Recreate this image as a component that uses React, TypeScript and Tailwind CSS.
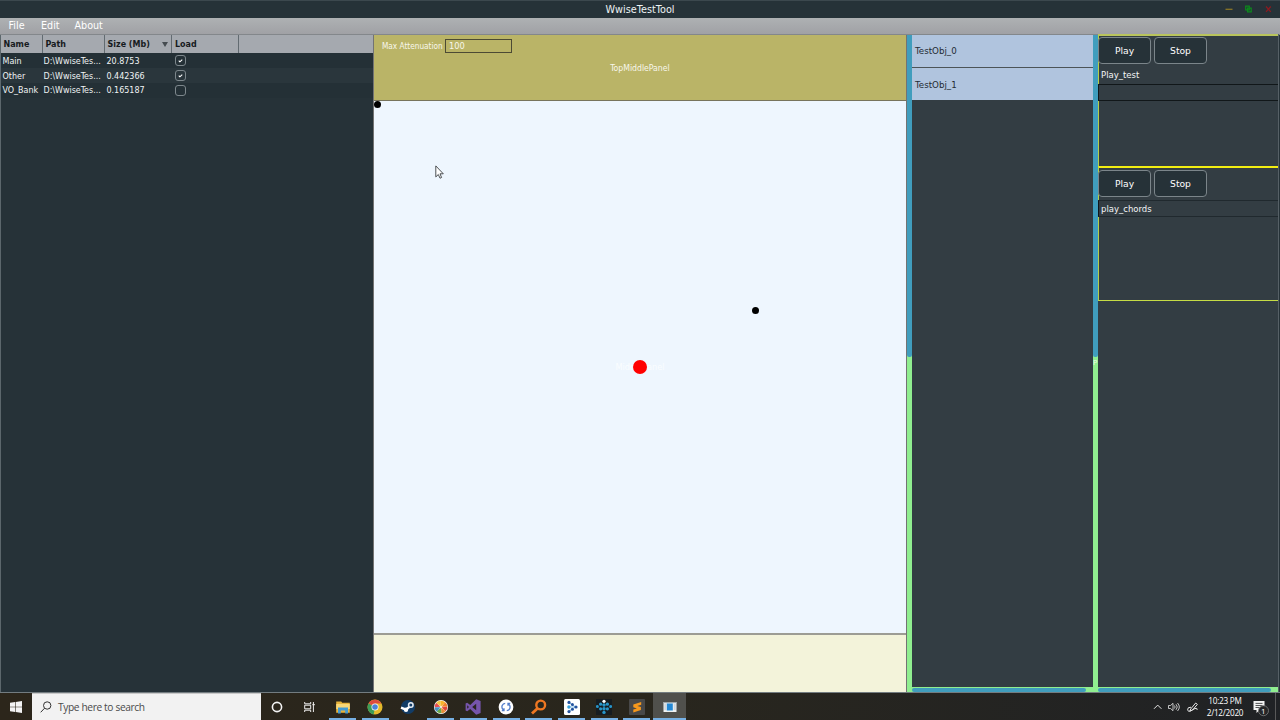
import type { ReactNode } from "react";

const BANKS = [
  { name: "Main", path: "D:\\WwiseTes...", size: "20.8753", loaded: true },
  { name: "Other", path: "D:\\WwiseTes...", size: "0.442366", loaded: true },
  { name: "VO_Bank", path: "D:\\WwiseTes...", size: "0.165187", loaded: false },
];

function TitleBar() {
  return (
    <div className="relative flex h-[18px] shrink-0 items-center justify-center border-t border-[#3c484e] bg-[#263238] text-[9.7px] text-[#eef2f4]">
      <span className="pt-px">WwiseTestTool</span>
      <svg className="absolute top-[3px] right-[4px] h-[10px] w-[52px]" viewBox="0 0 52 10" fill="none">
        <path d="M1.5 5.3h7" stroke="#8a7526" strokeWidth="1.3" />
        <path d="M21.7 2.2h3.6v3.6h-3.6zM23.6 4.2h3.6v3.6h-3.6z" stroke="#0c8a1c" strokeWidth="1.2" />
        <path d="M42 2.5l4.8 5.4M46.8 2.5L42 7.9" stroke="#8b1a20" strokeWidth="1.3" />
      </svg>
    </div>
  );
}

function MenuBar() {
  return (
    <div className="flex h-[17px] shrink-0 items-center border-b border-[#83878b] bg-linear-to-b from-[#aeb1b3] to-[#a0a1a5] text-[9.6px] text-white">
      <span className="w-[33px] pl-[8.5px]">File</span>
      <span className="w-[33px] pl-[8px]">Edit</span>
      <span className="pl-[8.5px]">About</span>
    </div>
  );
}

function BankRow({ name, path, size, loaded }: (typeof BANKS)[number]) {
  return (
    <div className="flex h-[14.8px] items-center text-[#f0f3f4] odd:bg-[#243036] even:bg-[#2a363c]">
      <span className="w-[41px] pl-[1.5px]">{name}</span>
      <span className="w-[63px] pl-[1.5px] whitespace-nowrap">{path}</span>
      <span className="w-[67px] pl-[1.5px]">{size}</span>
      <span className="ml-[3px] flex h-[11px] w-[11px] items-center justify-center rounded-[3px] border border-[#7d878c]">
        {loaded && (
          <svg viewBox="0 0 8 8" className="h-[7px] w-[7px]" fill="none" stroke="#fff" strokeWidth="1.2">
            <path d="M2 4.2l1.3 1.3L6 2.9" />
          </svg>
        )}
      </span>
    </div>
  );
}

function BankTable() {
  return (
    <section className="flex w-[373px] shrink-0 flex-col border-l border-[#5c676c] bg-[#263238] font-['DejaVu_Sans_Condensed','DejaVu_Sans',sans-serif] text-[8.9px]">
      <div className="flex h-[18px] items-stretch bg-[#a5a9af] leading-[18px] font-bold text-[#171b1e]">
        <span className="w-[42px] border-r border-[#626b71] pl-[2.5px]">Name</span>
        <span className="w-[62px] border-r border-[#626b71] pl-[2.5px]">Path</span>
        <span className="flex w-[67px] items-center justify-between border-r border-[#626b71] pr-[3px] pl-[2.5px]">
          Size (Mb)
          <svg viewBox="0 0 6 5" className="h-[5px] w-[6px]" fill="#454c50">
            <path d="M0 0h6L3 5z" />
          </svg>
        </span>
        <span className="w-[67px] border-r border-[#626b71] pl-[3px]">Load</span>
      </div>
      <div className="pt-[0.4px]">
        {BANKS.map((bank) => (
          <BankRow key={bank.name} {...bank} />
        ))}
      </div>
    </section>
  );
}

function MiddleColumn() {
  return (
    <section className="flex w-[534px] shrink-0 flex-col border-x border-[#737373]">
      <div className="relative h-[66px] shrink-0 border-b border-[#77745d] bg-[#bab467] font-['DejaVu_Sans_Condensed','DejaVu_Sans',sans-serif] text-[#f8f7ec]">
        <div className="flex items-center pt-[4px] pl-[8px] text-[8.2px]">
          <span className="w-[63px] whitespace-nowrap">Max Attenuation</span>
          <span className="flex h-[14px] w-[67px] items-center border border-[#4c4a34] pl-[3px] text-[9.2px]">100</span>
        </div>
        <p className="absolute inset-x-0 top-[27px] text-center text-[8.6px] leading-[12px]">TopMiddlePanel</p>
      </div>
      <div className="relative flex h-[532px] shrink-0 items-center justify-center bg-[#eef6fe] text-[8.2px] text-[#fafdff]">
        <span>MiddlePanel</span>
        <i className="absolute top-0 left-0 h-[7px] w-[7px] rounded-full bg-black" />
        <i className="absolute top-[205.5px] left-[378px] h-[7px] w-[7px] rounded-full bg-black" />
        <i className="absolute top-[259px] left-[259px] h-[14px] w-[14px] rounded-full bg-[#ff0000]" />
        <svg className="absolute top-[64px] left-[61px] h-[14px] w-[9px]" viewBox="0 0 9 14" fill="#fff" stroke="#3a3d40" strokeWidth="0.9">
          <path d="M.8.9v11l2.5-2.4 1.7 3.7 1.6-.7L5 8.8h3.3z" />
        </svg>
      </div>
      <div className="grow border-t-2 border-[#9c9c94] bg-[#f3f3da]" />
    </section>
  );
}

function VerticalBar({ children }: { children?: ReactNode }) {
  return (
    <div className="relative w-[5px] shrink-0 bg-[#90ee90]">
      <div className="mr-[0.5px] h-[322px] rounded-b-[2px] bg-[#409dbd]" />
      {children}
    </div>
  );
}

function HorizontalBar() {
  return (
    <div className="h-[5px] shrink-0 bg-[#90ee90] pt-px pr-[7px]">
      <div className="h-[4px] rounded-[2px] bg-[#409dbd]" />
    </div>
  );
}

function ObjectList() {
  return (
    <section className="flex w-[181px] shrink-0 flex-col bg-[#333d43]">
      <div className="grow text-[8.7px] text-[#242b33]">
        <div className="flex h-[33px] items-center border-b border-[#4c5457] bg-[#b0c4de] pl-[3px]">TestObj_0</div>
        <div className="flex h-[32px] items-center bg-[#b0c4de] pt-px pl-[3px]">TestObj_1</div>
      </div>
      <HorizontalBar />
    </section>
  );
}

function EventButton({ label }: { label: string }) {
  return (
    <span className="flex h-[27px] w-[53px] items-center justify-center rounded-[4px] border border-[#7b858a] bg-[#263238] text-[9.2px] text-white">
      {label}
    </span>
  );
}

function EventList() {
  return (
    <section className="relative -mt-px flex w-[181px] shrink-0 flex-col border-r border-[#566066] bg-[#333d43] text-[8.5px] text-[#f3f5f6]">
      <div className="h-[132px] shrink-0 border-t-2 border-l border-t-[#b9c45c] border-l-[#b5cf4a] pt-px">
        <div className="-ml-px flex gap-[3px]">
          <EventButton label="Play" />
          <EventButton label="Stop" />
        </div>
        <div className="flex h-[20px] items-center pt-[2px] pl-[2px]">Play_test</div>
        <div className="-ml-px h-[17px] border-y border-l border-[#111719]" />
      </div>
      <div className="h-[135px] shrink-0 border-t-2 border-b border-l border-t-[#f2ee12] border-b-[#c6dc45] border-l-[#b5cf4a] pt-[2px]">
        <div className="-ml-px flex gap-[3px]">
          <EventButton label="Play" />
          <EventButton label="Stop" />
        </div>
        <div className="mt-[3px] -ml-px flex h-[17px] items-center border-y border-l border-y-[#20292e] border-l-[#101518] pl-[2px]">play_chords</div>
      </div>
      <div className="grow" />
      <HorizontalBar />
    </section>
  );
}

function TaskIcon({ children, active, running = true }: { children: ReactNode; active?: boolean; running?: boolean }) {
  return (
    <div
      className={`relative flex h-full w-[32.7px] shrink-0 items-center justify-center ${active ? "bg-[#50504c]" : ""}`}
    >
      <svg viewBox="0 0 16 16" className="h-[16px] w-[16px]" fill="none">
        {children}
      </svg>
      {running && <i className={`absolute bottom-0 h-[2px] bg-[#76b0e4] ${active ? "w-full" : "w-[27px]"}`} />}
    </div>
  );
}

const CITRUS = ["#f7b52c", "#f0822d", "#e0473c", "#e88b35", "#69a94b", "#4a91c4", "#e84f52", "#f2c540"];

function Taskbar() {
  return (
    <footer className="flex h-[27px] shrink-0 items-center bg-linear-to-r from-[#2c261b] via-[#29261d] to-[#202225] font-['Open_Sans','Noto_Sans',sans-serif] text-white">
      <div className="flex h-full w-[32px] items-center justify-center">
        <svg viewBox="0 0 12 12" className="h-[12px] w-[12px]" fill="#f4f4f4">
          <path d="M0 1.7l5.2-.7v4.7H0zM5.8.9L12 0v5.7H5.8zM0 6.3h5.2V11L0 10.3zM5.8 6.3H12V12l-6.2-.9z" />
        </svg>
      </div>
      <div className="flex h-full w-[229px] items-center border-t border-[#c9c9c9] bg-[#f2f2f2] pl-[8px] text-[#4a4a4a]">
        <svg viewBox="0 0 12 12" className="h-[12px] w-[12px]" fill="none" stroke="#333" strokeWidth="1">
          <circle cx="7.2" cy="4.5" r="3.7" />
          <path d="M4.6 7.2L.7 11.3" />
        </svg>
        <span className="pl-[6px] text-[10.2px] tracking-[-0.37px]">Type here to search</span>
      </div>
      <TaskIcon running={false}>
        <circle cx="8" cy="8" r="4.6" stroke="#f3f3f3" strokeWidth="1.6" />
      </TaskIcon>
      <TaskIcon running={false}>
        <path d="M2.7 3v1.8h6V3M2.7 13v-1.8h6V13M2.7 6.2h6v3.6h-6zM11.4 3v10M10.3 5.7h2.6" stroke="#eee" />
      </TaskIcon>
      <TaskIcon>
        <path d="M1.2 2.5h5l1 1.3h7.6v10H1.2z" fill="#e8b43c" />
        <path d="M1.2 5h13.6v5H1.2z" fill="#f8d778" />
        <path d="M3 8.4h10v6h-2.8v-3H5.8v3H3z" fill="#449bd2" />
      </TaskIcon>
      <TaskIcon>
        <circle cx="8" cy="8" r="7.5" fill="#e3b92c" />
        <path d="M8 8L6.7 15.4A7.5 7.5 0 011.6 4.2z" fill="#3c9c58" />
        <path d="M1.6 4.2A7.5 7.5 0 0114.5 4.4H8V8z" fill="#dd4b3e" />
        <circle cx="8" cy="8" r="3.5" fill="#fff" />
        <circle cx="8" cy="8" r="2.8" fill="#4a83d8" />
      </TaskIcon>
      <TaskIcon running={false}>
        <circle cx="8" cy="8" r="7" fill="#123c66" />
        <path d="M1 8.6l5 2 4.8-4" stroke="#fff" strokeWidth="2.4" />
        <circle cx="10.8" cy="6" r="3" fill="#e9eef3" />
        <circle cx="10.8" cy="6" r="1.5" fill="#123c66" />
        <circle cx="6" cy="10.7" r="2.2" fill="#fff" />
      </TaskIcon>
      <TaskIcon>
        <circle cx="8" cy="8" r="7" fill="#fff" />
        {CITRUS.map((color, i) => (
          <path key={i} d="M8 7.4L5.5 2.2Q8 .9 10.5 2.2z" fill={color} transform={`rotate(${i * 45 + 20} 8 8)`} />
        ))}
      </TaskIcon>
      <TaskIcon>
        <path d="M11.2.3L15.6 2v12l-4.4 1.7-6-5.8-3 2.4L.6 11.5v-7l1.6-.8 3 2.4z" fill="#7655ab" />
        <path d="M11.2 4.8v6.4L7.2 8zM2.2 6.2v3.6L4 8z" fill="#29251e" />
      </TaskIcon>
      <TaskIcon>
        <circle cx="8" cy="8" r="7.4" fill="#fff" />
        <path d="M7.2 4.3c-3 .3-4.2 3.8-2.4 6L6 11.6M8.8 11.7c3-.3 4.2-3.8 2.4-6L10 4.4M3.8 11.6H6V9.3M12.2 4.4H10v2.3" stroke="#527dca" strokeWidth="1.3" />
      </TaskIcon>
      <TaskIcon>
        <circle cx="9.7" cy="6" r="4.4" stroke="#ee7722" strokeWidth="2.4" />
        <path d="M6.4 9.4L1 14.6" stroke="#ee7722" strokeWidth="2.8" />
      </TaskIcon>
      <TaskIcon>
        <rect width="16" height="16" rx="1.5" fill="#fff" />
        <path d="M5 3.5l6.5 4.4L5 12.5M5 8h6" stroke="#70aee0" strokeWidth="0.8" />
        <g fill="#23529e">
          <circle cx="5" cy="3.4" r="1.6" />
          <circle cx="5" cy="12.6" r="1.6" />
          <circle cx="8.4" cy="5.5" r="1.5" />
          <circle cx="8.4" cy="10.3" r="1.5" />
          <circle cx="12" cy="8" r="1.6" />
        </g>
        <circle cx="4.9" cy="8" r="1.7" fill="#36a1dc" />
      </TaskIcon>
      <TaskIcon>
        <rect width="16" height="16" fill="#171c20" />
        <circle cx="8" cy="2.3" r="1.6" fill="#fff" />
        <g fill="#2795c9">
          <circle cx="8" cy="6" r="1.7" />
          <circle cx="8" cy="9.7" r="1.7" />
          <circle cx="8" cy="13.4" r="1.7" />
          <circle cx="4.6" cy="5.2" r="1.6" />
          <circle cx="11.4" cy="5.2" r="1.6" />
          <circle cx="4.6" cy="9.8" r="1.6" />
          <circle cx="11.4" cy="9.8" r="1.6" />
          <circle cx="1.4" cy="7.5" r="1.5" />
          <circle cx="14.6" cy="7.5" r="1.5" />
        </g>
      </TaskIcon>
      <TaskIcon>
        <rect width="16" height="16" rx="1" fill="#484848" />
        <path d="M12.2 3L4.3 5.4v2.8l3.6 1.2-3.6 1.2v2.8l7.6-2.5V8.1L8.3 6.9 12.2 5.7z" fill="#f6981d" />
      </TaskIcon>
      <TaskIcon active>
        <rect x="1.5" y="3" width="13" height="10" fill="#eef2f4" />
        <path d="M1.5 3h13v1.2h-13z" fill="#9da7ac" />
        <rect x="4.8" y="4.5" width="6" height="7" fill="#2387d3" />
        <path d="M2.3 6h1.8M2.3 8h1.8M2.3 10h1.8M11.7 6h2M11.7 8h2M11.7 10h2" stroke="#9ba8b0" strokeWidth="0.7" />
      </TaskIcon>
      <div className="ml-auto flex h-full items-center">
        <svg viewBox="0 0 48 14" className="h-[14px] w-[48px]" fill="none" stroke="#e7e7e7">
          <path d="M1 8.8l3.7-3.7 3.7 3.7" />
          <path d="M15.5 5.5h2L20 3.3v7.4l-2.5-2.2h-2zM21.5 5.5q1.2 1.5 0 3M23 4.2q2.5 2.8 0 5.6M24.5 3q3.7 4 0 8" strokeWidth="0.8" />
          <path d="M37.7 9l5-6 1.7 1.4-5 5.8-2.5.8zM38 7.2q-3.7-.2-3.4 2.7.5 2.5 3.2 1 2-1.4 4.2-2.4 2.4-.9 2.2 1.4" strokeWidth="1" />
        </svg>
        <div className="ml-[3px] w-[42px] text-center text-[8.2px] leading-[12px] tracking-[-0.25px] whitespace-nowrap">
          <div>10:23 PM</div>
          <div>2/12/2020</div>
        </div>
        <div className="relative mr-[2px] ml-[4px] h-[20px] w-[23px]">
          <svg viewBox="0 0 22 20" className="h-full w-full" fill="none">
            <path d="M3 4h11v9H9l-3 3v-3H3z" fill="#f2f2f2" />
            <path d="M5 6.4h7M5 8.5h7M5 10.5h4" stroke="#2a2b2c" strokeWidth="0.8" />
            <circle cx="13" cy="13.7" r="5" fill="#252627" stroke="#7c7c7c" strokeWidth="0.8" />
          </svg>
          <span className="absolute top-[8px] left-[11px] text-[8px] leading-[11px]">1</span>
        </div>
        <i className="h-full w-[5px] border-l border-[#595959]" />
      </div>
    </footer>
  );
}

export default function App() {
  return (
    <div className="flex h-[720px] w-[1280px] flex-col overflow-hidden bg-[#263238] font-['DejaVu_Sans',sans-serif] leading-[12px]">
      <TitleBar />
      <MenuBar />
      <main className="flex h-[658px] shrink-0 border-b border-[#737c80]">
        <BankTable />
        <MiddleColumn />
        <VerticalBar />
        <ObjectList />
        <VerticalBar>
          <span className="absolute top-[323px] left-0 text-[7px] leading-[10px] text-[#edffed]">P</span>
        </VerticalBar>
        <EventList />
      </main>
      <Taskbar />
    </div>
  );
}
